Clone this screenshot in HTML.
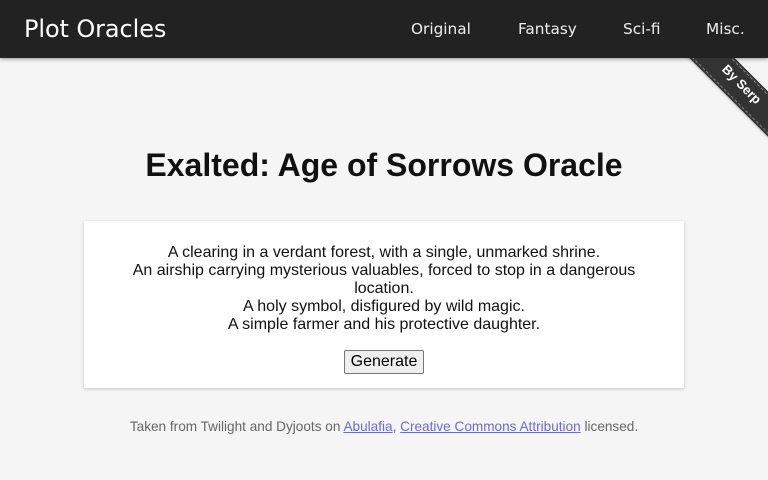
<!DOCTYPE html>
<html><head><meta charset="utf-8"><style>
body{margin:0;width:768px;height:480px;background:#f5f5f5;font-family:"Liberation Sans",sans-serif;overflow:hidden;position:relative}
.nav{height:58px;background:#222;box-shadow:0 1px 4px rgba(0,0,0,.4);position:relative;color:#fff;font-family:"DejaVu Sans",sans-serif}
.brand{position:absolute;left:24px;top:15px;font-size:24px;font-weight:normal;letter-spacing:-0.1px}
.nav a{position:absolute;top:20px;font-size:15.3px;color:#eee}
.rb{position:absolute;left:658px;top:58px;width:110px;height:110px;overflow:hidden}
.rib{position:absolute;left:-18px;top:14px;width:200px;height:28px;background:#333;transform:rotate(45deg);color:#fff;font-size:13px;font-weight:bold;text-align:center;line-height:22px;box-sizing:border-box;border:1px dashed #888;outline:2px solid #333;box-shadow:0 2px 3px rgba(0,0,0,.4)}
h1{position:absolute;top:147px;width:768px;margin:0;text-align:center;font-size:32px;font-weight:bold;color:#111}
.card{position:absolute;left:84px;top:221px;width:600px;height:167px;background:#fff;box-shadow:0 1px 3px rgba(0,0,0,.2);text-align:center;font-size:16px;line-height:18px;color:#111}
.txt{padding:23px 48px 0}
button{margin-top:16px;font:16px "Liberation Sans",sans-serif;padding:2px 6px;background:#efefef;border:1px solid #767676;border-radius:2px;color:#000}
.foot{position:absolute;top:419px;width:768px;text-align:center;font-size:13.6px;color:#666}
.foot a{color:#6a6adf}
</style></head><body>
<div class="nav"><div class="brand">Plot Oracles</div>
<a style="left:411px">Original</a><a style="left:518px">Fantasy</a><a style="left:623px">Sci-fi</a><a style="left:706px">Misc.</a></div>
<div class="rb"><div class="rib">By Serp</div></div>
<h1>Exalted: Age of Sorrows Oracle</h1>
<div class="card"><div class="txt">A clearing in a verdant forest, with a single, unmarked shrine.<br>An airship carrying mysterious valuables, forced to stop in a dangerous location.<br>A holy symbol, disfigured by wild magic.<br>A simple farmer and his protective daughter.</div>
<button>Generate</button></div>
<div class="foot">Taken from Twilight and Dyjoots on <a href="#">Abulafia</a>, <a href="#">Creative Commons Attribution</a> licensed.</div>
</body></html>
